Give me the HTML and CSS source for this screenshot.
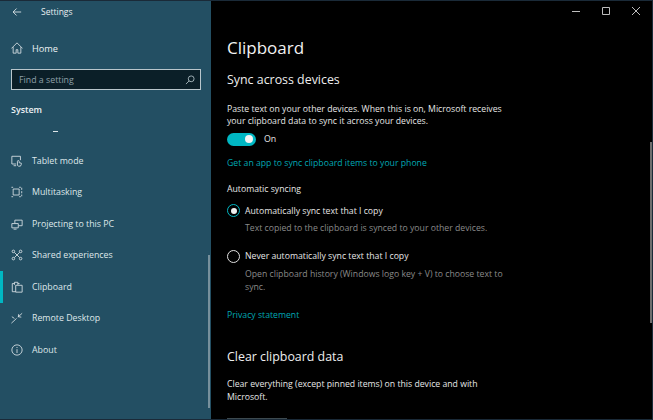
FILE: index.html
```html
<!DOCTYPE html>
<html lang="en">
<head>
<meta charset="utf-8">
<title>Settings</title>
<link rel="stylesheet" href="styles.css">
</head>
<body>
<div class="window">
  <aside class="sidebar">
    <div class="titlebar">
      <svg class="back" width="10" height="10" viewBox="0 0 12 12"><path d="M11 6H1.500M5.500 1.800 1.300 6l4.200 4.200" /></svg>
      <span class="apptitle">Settings</span>
    </div>
    <div class="home nav-row">
      <svg class="ico" width="12" height="12" viewBox="0 0 14 14"><path d="M.5 7.500 7 1l6.500 6.500M2.500 6v7h3.500V9h2v4h3.500V6"/></svg>
      <span class="home-label">Home</span>
    </div>
    <div class="search">
      <span>Find a setting</span>
      <svg class="search-ico" width="10" height="10" viewBox="0 0 11 11"><circle cx="6.800" cy="4.200" r="3.200"/><path d="M4.500 6.500 1 10"/></svg>
    </div>
    <div class="section">System</div>
    <div class="sliver"></div>
    <nav class="nav">
      <div class="nav-row">
        <svg class="ico" width="12" height="12" viewBox="0 0 14 14"><path d="M6 10.500H1V1.500h10V6M3 12.500h3"/><path d="M7.500 12V7.500a1 1 0 0 1 2 0V9l2.500.500V11l-1 2H8.500z"/></svg>
        <span>Tablet mode</span>
      </div>
      <div class="nav-row">
        <svg class="ico" width="12" height="12" viewBox="0 0 14 14"><path d="M2.500 3.500h7v7h-7zM.5 1.500h2M.5 12.500h2M9.500 1.500h2M9.500 12.500h2M12.500 2v2.500M12.500 6v2.500M12.500 10v2"/></svg>
        <span>Multitasking</span>
      </div>
      <div class="nav-row">
        <svg class="ico" width="12" height="12" viewBox="0 0 14 14"><path d="M4.500 6V2.500h8.500v6.500H9"/><path d="M1 6.500h7.500v5H1zM3 13h3.500"/></svg>
        <span>Projecting to this PC</span>
      </div>
      <div class="nav-row">
        <svg class="ico" width="12" height="12" viewBox="0 0 14 14"><path d="M4 4l6 6M10 4l-6 6"/><circle cx="2.800" cy="2.800" r="1.500"/><circle cx="11.200" cy="2.800" r="1.500"/><circle cx="2.800" cy="11.200" r="1.500"/><circle cx="11.200" cy="11.200" r="1.500"/></svg>
        <span>Shared experiences</span>
      </div>
      <div class="nav-row active">
        <svg class="ico" width="12" height="12" viewBox="0 0 14 14"><path d="M4 3H1.500v9.500h4M4 4.500V1.500h4V4.500"/><path d="M5.500 5h7.500v8H5.500zM10 3H8"/></svg>
        <span>Clipboard</span>
      </div>
      <div class="nav-row">
        <svg class="ico" width="12" height="12" viewBox="0 0 14 14"><path d="M.5 13 6.500 7.500M1 5.500l3 2M8 6l5-4.500M9 2.500l-.5 3 3.500.500"/></svg>
        <span>Remote Desktop</span>
      </div>
      <div class="nav-row">
        <svg class="ico" width="12" height="12" viewBox="0 0 14 14"><circle cx="7" cy="7" r="6"/><path d="M7 6v4.500M7 3.500v1.200"/></svg>
        <span>About</span>
      </div>
    </nav>
    <div class="side-thumb"></div>
  </aside>
  <main class="main">
    <div class="controls">
      <svg width="10" height="10" viewBox="0 0 10 10"><path d="M1 5.500h8"/></svg>
      <svg width="10" height="10" viewBox="0 0 10 10"><path d="M1.500 1.500h7v7h-7z"/></svg>
      <svg width="10" height="10" viewBox="0 0 10 10"><path d="M1 1l8 8M9 1l-8 8"/></svg>
    </div>
    <h1>Clipboard</h1>
    <h2 class="sync-head">Sync across devices</h2>
    <p class="para">Paste text on your other devices. When this is on, Microsoft receives<br>your clipboard data to sync it across your devices.</p>
    <div class="toggle-row">
      <span class="toggle"><span class="knob"></span></span>
      <span>On</span>
    </div>
    <a class="link get-app">Get an app to sync clipboard items to your phone</a>
    <div class="auto">Automatic syncing</div>
    <div class="radio-row first">
      <span class="radio on"><span class="dot"></span></span>
      <span>Automatically sync text that I copy</span>
    </div>
    <p class="hint first-hint">Text copied to the clipboard is synced to your other devices.</p>
    <div class="radio-row second">
      <span class="radio"></span>
      <span>Never automatically sync text that I copy</span>
    </div>
    <p class="hint second-hint">Open clipboard history (Windows logo key + V) to choose text to<br>sync.</p>
    <a class="link privacy">Privacy statement</a>
    <h2 class="clear-head">Clear clipboard data</h2>
    <p class="para clear-para">Clear everything (except pinned items) on this device and with<br>Microsoft.</p>
    <div class="button"></div>
    <div class="main-thumb"></div>
  </main>
</div>
</body>
</html>
```
FILE: styles.css
```css
* { box-sizing: border-box; }
html, body { margin: 0; height: 100%; background: #000; overflow: hidden; }
body { font-family: "Open Sans", "Noto Sans", sans-serif; font-size: 8.800px; color: #e6e6e6; }
.window { display: flex; width: 653px; height: 420px; border: 1px solid #1a2a38; border-left: 0; }
.sidebar { position: relative; flex: 0 0 211px; background: #234f63; overflow: hidden; }
svg { fill: none; stroke: currentColor; stroke-width: 1; display: block; flex: none; }
.titlebar { display: flex; align-items: center; height: 21px; padding-left: 12px; color: #e8eef0; }
.apptitle { margin-left: 19px; font-size: 8.500px; }
.nav-row { display: flex; align-items: center; height: 31.500px; padding-left: 11px; gap: 9px; color: #dfe7ea; }
.ico { color: #d9e2e6; }
.home { margin-top: 10px; height: 32px; }
.home-label { font-size: 9.200px; color: #eef2f4; }
.search { display: flex; align-items: center; justify-content: space-between; margin: 5px 11px 0; width: 190px; height: 21px; padding: 0 5px 0 7px; background: #0b1f28; border: 1px solid #b9c6cc; color: #8fa0a8; }
.search-ico { color: #a9b8be; }
.section { margin: 13px 0 0 11px; font-weight: 600; font-size: 8.900px; color: #eef2f4; height: 18px; }
.sliver { width: 5px; height: 1px; margin: 10px 0 0 53px; background: #dfe6e9; }
.nav { margin-top: 13px; }
.active { box-shadow: inset 3px 0 0 #00b7c3; }
.side-thumb { position: absolute; left: 208px; top: 254px; width: 2px; height: 153px; background: #77909c; }
.main { position: relative; flex: 1; background: #000; padding-left: 16px; overflow: hidden; }
.controls { position: absolute; top: 5px; right: 1px; display: flex; color: #bdbdbd; }
.controls svg { margin: 0 10px; }
h1 { margin: 35px 0 0; font-weight: 400; font-size: 17px; line-height: 24px; color: #f2f2f2; }
h2 { margin: 0; font-weight: 400; font-size: 12.400px; line-height: 18px; color: #eeeeee; }
.sync-head { margin-top: 10.500px; }
.para { margin: 0; line-height: 12px; font-size: 8.700px; color: #e6e6e6; }
.main > .para { margin-top: 14.500px; }
.toggle-row { display: flex; align-items: center; gap: 8px; margin-top: 5.500px; height: 13px; }
.toggle { display: flex; align-items: center; justify-content: flex-end; width: 29px; height: 13px; padding-right: 3px; border-radius: 7px; background: #00b7c3; }
.knob { width: 8px; height: 8px; border-radius: 50%; background: #f4f4f4; }
.link { display: block; color: #00a7b3; font-size: 8.700px; line-height: 13px; }
.get-app { margin-top: 11px; }
.auto { margin-top: 13px; line-height: 13px; font-size: 8.700px; }
.radio-row { display: flex; align-items: center; gap: 5px; height: 14px; font-size: 8.700px; }
.first { margin-top: 8px; }
.second { margin-top: 15px; }
.radio { display: flex; align-items: center; justify-content: center; width: 13px; height: 13px; border-radius: 50%; border: 1.500px solid #e0e0e0; }
.radio.on { border-color: #00b7c3; }
.dot { width: 6px; height: 6px; border-radius: 50%; background: #f0f0f0; }
.hint { margin: 0 0 0 18px; color: #8a8a8a; font-size: 8.700px; line-height: 12.500px; }
.first-hint { margin-top: 4px; }
.second-hint { margin-top: 5px; }
.privacy { margin-top: 15.500px; }
.clear-head { margin-top: 26px; }
.main > .clear-para { margin-top: 12px; line-height: 13px; }
.button { margin-top: 14px; width: 60px; height: 20px; background: #3d4a50; }
.main-thumb { position: absolute; left: 439px; top: 141px; width: 2px; height: 181px; background: #6e6e6e; }
```
